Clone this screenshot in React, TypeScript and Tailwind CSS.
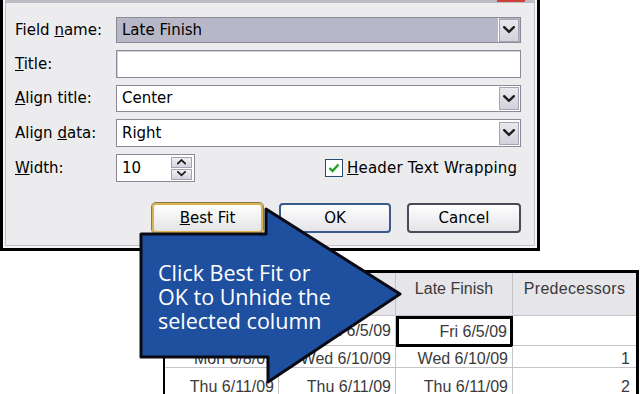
import React from 'react';

function Chevron({ up = false, size = 12 }: { up?: boolean; size?: number }) {
  return (
    <svg width={size} height={size * 0.6} viewBox="0 0 10 6" className="block">
      <polyline
        points={up ? '1,5 5,1.2 9,5' : '1,1 5,4.8 9,1'}
        fill="none"
        stroke="#1e1e1e"
        strokeWidth="2"
        strokeLinecap="square"
      />
    </svg>
  );
}

function DropBtn() {
  return (
    <div className="w-[20px] h-[23px] my-auto mr-[1px] flex items-center justify-center border border-[#a4a4b2] bg-gradient-to-b from-[#e8e8ee] to-[#d2d2dc]">
      <Chevron />
    </div>
  );
}

function Row({ label, h, children }: { label: React.ReactNode; h: string; children: React.ReactNode }) {
  return (
    <div className={`flex items-center ${h}`}>
      <div className="w-[101px] shrink-0">{label}</div>
      {children}
    </div>
  );
}

export default function App() {
  return (
    <div
      className="relative w-[640px] h-[394px] overflow-hidden bg-white text-black"
      style={{ fontFamily: '"DejaVu Sans", Verdana, sans-serif' }}
    >
      {/* dialog */}
      <div className="w-[540px] h-[251px] border-l-[3px] border-r-[3px] border-b-[3px] border-black bg-[#f6f6f8]">
        <div className="h-full flex flex-col border-l-[2px] border-r-[2px] border-b-[2px] border-[#f6f6f8]">
          <div className="h-[3px] bg-[#bcbcc4] flex justify-end">
            <div className="w-[28px] h-[2px] bg-[#d0403a] mr-[10px]" />
          </div>
          <div className="flex-1 flex flex-col bg-[#ececee] border-l border-r border-b border-[#c2c2ca] pl-[9px] pt-[14px] text-[15px]">
            <div className="flex flex-col gap-[7px]">
              <Row label={<>Field <u>n</u>ame:</>} h="h-[26px]">
                <div className="w-[405px] h-full flex border border-[#8a8a96] bg-[#b7b7c7]">
                  <div className="flex-1 flex items-center pl-[5px] border-r border-white">Late Finish</div>
                  <DropBtn />
                </div>
              </Row>
              <Row label={<><u>T</u>itle:</>} h="h-[28px]">
                <div className="w-[405px] h-full border border-[#8a8a96] bg-white shadow-[inset_1px_1px_0_#d4d4dc]" />
              </Row>
              <Row label={<><u>A</u>lign title:</>} h="h-[27px]">
                <div className="w-[405px] h-full flex border border-[#8a8a96] bg-white">
                  <div className="flex-1 flex items-center pl-[5px]">Center</div>
                  <DropBtn />
                </div>
              </Row>
              <Row label={<>Align <u>d</u>ata:</>} h="h-[28px]">
                <div className="w-[405px] h-full flex border border-[#8a8a96] bg-white">
                  <div className="flex-1 flex items-center pl-[5px]">Right</div>
                  <DropBtn />
                </div>
              </Row>
              <Row label={<><u>W</u>idth:</>} h="h-[28px]">
                <div className="w-[79px] h-full flex border border-[#8a8a96] bg-white">
                  <div className="flex-1 flex items-center pl-[5px]">10</div>
                  <div className="flex flex-col justify-center gap-[1px] pr-[2px]">
                    <div className="w-[21px] h-[11px] flex items-center justify-center border border-[#a4a4b2] bg-gradient-to-b from-[#f0f0f4] to-[#d4d4de]">
                      <Chevron up size={9} />
                    </div>
                    <div className="w-[21px] h-[11px] flex items-center justify-center border border-[#a4a4b2] bg-gradient-to-b from-[#f0f0f4] to-[#d4d4de]">
                      <Chevron size={9} />
                    </div>
                  </div>
                </div>
                <div className="ml-[130px] flex items-center gap-[4px]">
                  <div className="w-[18px] h-[18px] border border-[#2a4a6a] bg-white flex items-center justify-center">
                    <svg width="12" height="10" viewBox="0 0 12 10">
                      <polyline points="1.5,5 4.5,8 10.5,1.5" fill="none" stroke="#22a02a" strokeWidth="2.4" />
                    </svg>
                  </div>
                  <span className="tracking-[0.2px]">
                    <u>H</u>eader Text Wrapping
                  </span>
                </div>
              </Row>
            </div>
            <div className="flex mt-[21px] ml-[137px] gap-[16px] h-[30px]">
              <div className="w-[111px] h-full rounded-[4px] border-2 border-[#d8b450] bg-gradient-to-b from-white to-[#e4e4e4] flex items-center justify-center shadow-[0_0_0_1px_#8a7a4a]">
                <span>
                  <u>B</u>est Fit
                </span>
              </div>
              <div className="w-[112px] h-full rounded-[4px] border-2 border-[#3a5a8a] bg-gradient-to-b from-white to-[#e4e4ea] flex items-center justify-center">
                OK
              </div>
              <div className="w-[114px] h-full rounded-[4px] border-2 border-[#4a4a5a] bg-gradient-to-b from-white to-[#e4e4e8] flex items-center justify-center">
                Cancel
              </div>
            </div>
          </div>
        </div>
      </div>

      {/* table */}
      <div
        className="mt-[19px] ml-[163px] w-[476px] border-t-[3px] border-l-[2px] border-r-[3px] border-black text-[16px] text-[#3a3a3a]"
        style={{ fontFamily: '"Liberation Sans", Arial, sans-serif' }}
      >
        <div className="grid grid-cols-[114px_117px_117px_1fr] h-[43px] bg-[#e6e6ea] border-b border-[#c4c4c8]">
          <div className="border-r border-[#c4c4c8]" />
          <div className="border-r border-[#c4c4c8]" />
          <div className="border-r border-[#c4c4c8] text-center pt-[4px]">Late Finish</div>
          <div className="text-center pt-[4px] tracking-[0.3px]">Predecessors</div>
        </div>
        <div className="grid grid-cols-[114px_117px_117px_1fr] h-[30px] border-b border-[#c4c4c8]">
          <div className="border-r border-[#c4c4c8]" />
          <div className="border-r border-[#c4c4c8] text-right pr-[4px] pt-[3px]">Fri 6/5/09</div>
          <div className="border-[3px] border-black text-right pr-[3px] pt-[1px]">Fri 6/5/09</div>
          <div />
        </div>
        <div className="grid grid-cols-[114px_117px_117px_1fr] h-[22px] border-b border-[#c4c4c8]">
          <div className="border-r border-[#c4c4c8] text-right pr-[4px] pt-[1px]">Mon 6/8/09</div>
          <div className="border-r border-[#c4c4c8] text-right pr-[4px] pt-[1px]">Wed 6/10/09</div>
          <div className="border-r border-[#c4c4c8] text-right pr-[4px] pt-[1px]">Wed 6/10/09</div>
          <div className="text-right pr-[6px] pt-[1px]">1</div>
        </div>
        <div className="grid grid-cols-[114px_117px_117px_1fr] h-[30px]">
          <div className="border-r border-[#c4c4c8] text-right pr-[4px] pt-[7px]">Thu 6/11/09</div>
          <div className="border-r border-[#c4c4c8] text-right pr-[4px] pt-[7px]">Thu 6/11/09</div>
          <div className="border-r border-[#c4c4c8] text-right pr-[4px] pt-[7px]">Thu 6/11/09</div>
          <div className="text-right pr-[6px] pt-[7px]">2</div>
        </div>
      </div>

      {/* callout arrow */}
      <svg className="absolute left-0 top-0 pointer-events-none" width="640" height="394" viewBox="0 0 640 394">
        <polygon
          points="141,234 266,234 266,209 400,294 268,382 268,357 141,357"
          fill="#1f4f9f"
          stroke="#0a0a14"
          strokeWidth="3"
          strokeLinejoin="round"
        />
      </svg>
      <div
        className="absolute left-[158px] top-[261px] text-white text-[21.5px] leading-[24px] font-medium"
        style={{ fontFamily: '"Open Sans", "Noto Sans", sans-serif' }}
      >
        Click Best Fit or
        <br />
        OK to Unhide the
        <br />
        selected column
      </div>
    </div>
  );
}
